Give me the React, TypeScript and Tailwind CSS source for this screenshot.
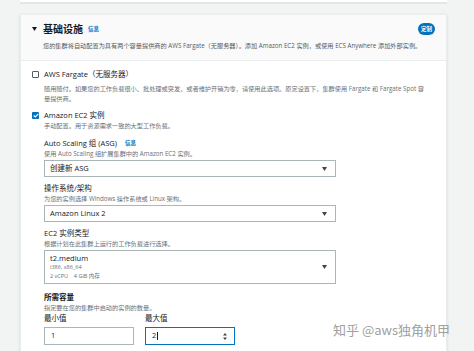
const font = { fontFamily: '"Open Sans", "Noto Sans CJK SC", sans-serif' };

function Caret() {
  return (
    <svg width="5" height="4" viewBox="0 0 5 4" className="shrink-0">
      <path d="M0 0 L5 0 L2.5 4 Z" fill="#444" />
    </svg>
  );
}

function Select({ value }: { value: string }) {
  return (
    <div className="flex h-[17px] w-[292px] items-center justify-between border border-[#aab7b8] bg-white pl-[5px] pr-[8px] text-[7.5px] text-[#16191f]">
      <span>{value}</span>
      <Caret />
    </div>
  );
}

function Field({ label, desc, info, children }: { label: string; desc: string; info?: boolean; children: React.ReactNode }) {
  return (
    <div className="flex flex-col">
      <div className="flex h-[11px] items-center gap-[8px] text-[7.5px] text-[#16191f]">
        <span>{label}</span>
        {info && <span className="text-[5.5px] font-bold text-[#0073bb]">信息</span>}
      </div>
      <div className="h-[10px] whitespace-nowrap text-[6.2px] leading-[10px] text-[#687078]">{desc}</div>
      <div className="mt-[1px]">{children}</div>
    </div>
  );
}

export default function App() {
  return (
    <main className="relative h-[351px] w-[474px] overflow-hidden bg-[#f2f3f3]" style={font}>
      <div className="ml-[20px] h-[4px] w-[427px] border-b-2 border-[#e3e6e6] bg-white" />
      <section className="ml-[20px] mt-[10px] w-[427px] border border-[#eaeded] bg-white shadow-sm">
        <header className="border-b border-[#eaeded] bg-[#fafafa] pb-[10px] pl-[11px] pr-[11px] pt-[7px]">
          <div className="flex h-[14px] items-center justify-between">
            <div className="flex items-center">
              <svg width="5" height="4" viewBox="0 0 5 4" className="mr-[6px]">
                <path d="M0 0 L5 0 L2.5 4 Z" fill="#16191f" />
              </svg>
              <h2 className="text-[10px] font-bold leading-[14px] text-[#16191f]">基础设施</h2>
              <span className="ml-[5px] text-[5.5px] font-bold text-[#0073bb]">信息</span>
            </div>
            <span className="rounded-full bg-[#0073bb] px-[3px] text-[5.5px] font-bold leading-[12px] text-white">定制</span>
          </div>
          <p className="mt-[5px] whitespace-nowrap pl-[11px] text-[6.2px] leading-[9px] text-[#545b64]">
            您的集群将自动配置为具有两个容量提供商的 AWS Fargate（无服务器）。添加 Amazon EC2 实例，或使用 ECS Anywhere 添加外部实例。
          </p>
        </header>

        <div className="pb-[8px] pl-[11px] pr-[11px] pt-[8px]">
          <div className="flex gap-[5px]">
            <span className="mt-[2px] h-[7px] w-[7px] shrink-0 rounded-[1px] border border-[#545b64] bg-white" />
            <div>
              <div className="h-[11px] text-[7.5px] leading-[11px] text-[#16191f]">AWS Fargate（无服务器）</div>
              <p className="mt-[4px] whitespace-nowrap text-[6.2px] leading-[10px] text-[#687078]">
                随用随付。如果您的工作负载很小、批处理或突发，或者维护开销为零，请使用此选项。原定设置下，集群使用 Fargate 和 Fargate Spot 容
                <br />
                量提供商。
              </p>
            </div>
          </div>

          <div className="mt-[6px] flex gap-[5px]">
            <span className="mt-[2px] flex h-[7px] w-[7px] shrink-0 items-center justify-center rounded-[1px] bg-[#0073bb]">
              <svg width="6" height="5" viewBox="0 0 6 5">
                <path d="M0.7 2.5 L2.3 4 L5.3 0.8" fill="none" stroke="white" strokeWidth="1.2" />
              </svg>
            </span>
            <div>
              <div className="h-[11px] text-[7.5px] leading-[11px] text-[#16191f]">Amazon EC2 实例</div>
              <p className="text-[6.2px] leading-[10px] text-[#687078]">手动配置。用于资源需求一致的大型工作负载。</p>
            </div>
          </div>

          <div className="ml-[12px] mt-[7px] flex flex-col gap-[6px]">
            <Field label="Auto Scaling 组 (ASG)" desc="使用 Auto Scaling 组扩展集群中的 Amazon EC2 实例。" info>
              <Select value="创建新 ASG" />
            </Field>
            <Field label="操作系统/架构" desc="为您的实例选择 Windows 操作系统或 Linux 架构。">
              <Select value="Amazon Linux 2" />
            </Field>
            <Field label="EC2 实例类型" desc="根据计划在此集群上运行的工作负载进行选择。">
              <div className="flex h-[34px] w-[292px] items-center justify-between border border-[#aab7b8] bg-white pl-[5px] pr-[8px]">
                <div className="flex flex-col">
                  <span className="text-[7.5px] leading-[10px] text-[#16191f]">t2.medium</span>
                  <span className="text-[5.5px] leading-[9px] text-[#687078]">i386, x86_64</span>
                  <span className="text-[5.5px] leading-[9px] text-[#687078]">2 vCPU&nbsp;&nbsp;&nbsp;&nbsp;4 GiB 内存</span>
                </div>
                <Caret />
              </div>
            </Field>
            <div className="mt-[2px] flex flex-col">
              <div className="h-[11px] text-[7.5px] font-bold leading-[11px] text-[#16191f]">所需容量</div>
              <div className="h-[10px] text-[6.2px] leading-[10px] text-[#687078]">指定要在您的集群中启动的实例的数量。</div>
              <div className="flex gap-[11px]">
                <div className="flex flex-col gap-[3px]">
                  <span className="h-[11px] text-[7.5px] leading-[11px] text-[#16191f]">最小值</span>
                  <div className="flex h-[18px] w-[90px] items-center border border-[#aab7b8] pl-[6px] text-[7.5px] text-[#16191f]">1</div>
                </div>
                <div className="flex flex-col gap-[3px]">
                  <span className="h-[11px] text-[7.5px] leading-[11px] text-[#16191f]">最大值</span>
                  <div className="flex h-[18px] w-[90px] items-center justify-between border border-[#0073bb] pl-[6px] pr-[7px] text-[7.5px] text-[#16191f]">
                    <span className="flex items-center">
                      2<span className="ml-px inline-block h-[8px] w-px bg-[#16191f]" />
                    </span>
                    <svg width="4" height="7" viewBox="0 0 4 7">
                      <path d="M0 2.6 L4 2.6 L2 0 Z M0 4.4 L4 4.4 L2 7 Z" fill="#444" />
                    </svg>
                  </div>
                </div>
              </div>
            </div>
          </div>
        </div>
      </section>
      <div className="absolute left-[333px] top-[320px] text-[13px] leading-[20px] text-[#a0a0a0]" style={{ fontFamily: '"Noto Sans CJK SC", sans-serif' }}>
        知乎 @aws独角机甲
      </div>
    </main>
  );
}
